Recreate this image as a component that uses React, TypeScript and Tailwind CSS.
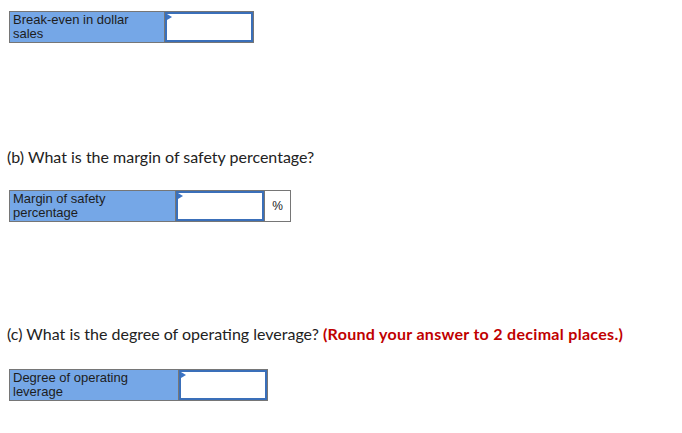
const Tri = () => (
  <span className="absolute left-0 top-0 w-0 h-0 border-y-[3px] border-y-transparent border-l-[5px] border-l-[#3b73c4]" />
);

type RowProps = { label: string[]; labelW: string; unit?: string };

const InputRow = ({ label, labelW, unit }: RowProps) => (
  <div className="flex ml-[9px] w-max border border-[#767676] bg-[#767676] gap-px h-[32px]">
    <div className={`${labelW} bg-[#75a7e7] px-[3px] pt-[1px] text-[13px] leading-[14px] text-[#1d1d1d]`}>
      {label.map((l) => (
        <div key={l}>{l}</div>
      ))}
    </div>
    <div className="relative w-[88px] bg-white border-2 border-[#3a6fb9]">
      <Tri />
    </div>
    {unit && (
      <div className="w-[25px] bg-white flex items-center justify-center text-[12px] text-[#222]">
        {unit}
      </div>
    )}
  </div>
);

export default function App() {
  return (
    <div className="w-[682px] h-[433px] bg-white font-['Liberation_Sans',Arial,sans-serif] overflow-hidden">
      <div className="pt-[11px]">
        <InputRow label={['Break-even in dollar', 'sales']} labelW="w-[154px]" />
      </div>
      <p className="ml-[7px] mt-[104px] text-[16px] leading-[20px] text-[#222] font-['Lato',sans-serif]">
        (b) What is the margin of safety percentage?
      </p>
      <div className="mt-[23px]">
        <InputRow label={['Margin of safety', 'percentage']} labelW="w-[165px]" unit="%" />
      </div>
      <p className="ml-[7px] mt-[102px] text-[16px] leading-[20px] text-[#222] font-['Lato',sans-serif]">
        (c) What is the degree of operating leverage?{' '}
        <span className="font-bold tracking-[0.3px] text-[#c00000]">(Round your answer to 2 decimal places.)</span>
      </p>
      <div className="mt-[25px]">
        <InputRow label={['Degree of operating', 'leverage']} labelW="w-[168px]" />
      </div>
    </div>
  );
}
